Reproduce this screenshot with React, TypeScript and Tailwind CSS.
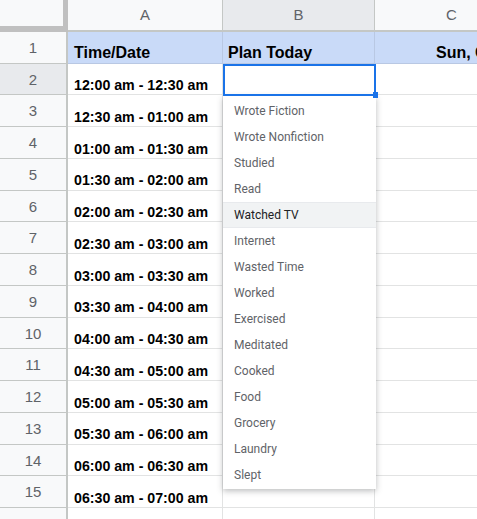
import React from 'react';

const times = [
  '12:00 am - 12:30 am',
  '12:30 am - 01:00 am',
  '01:00 am - 01:30 am',
  '01:30 am - 02:00 am',
  '02:00 am - 02:30 am',
  '02:30 am - 03:00 am',
  '03:00 am - 03:30 am',
  '03:30 am - 04:00 am',
  '04:00 am - 04:30 am',
  '04:30 am - 05:00 am',
  '05:00 am - 05:30 am',
  '05:30 am - 06:00 am',
  '06:00 am - 06:30 am',
  '06:30 am - 07:00 am',
];

const options = [
  'Wrote Fiction',
  'Wrote Nonfiction',
  'Studied',
  'Read',
  'Watched TV',
  'Internet',
  'Wasted Time',
  'Worked',
  'Exercised',
  'Meditated',
  'Cooked',
  'Food',
  'Grocery',
  'Laundry',
  'Slept',
];

function ColumnHeader() {
  return (
    <div className="flex h-[31.75px] shrink-0 text-[15px] text-[#5f6368]">
      <div className="w-[68px] shrink-0 bg-[#f8f9fa] border-r-[5px] border-b-[6px] border-[#c0c0c0]" />
      <div className="w-[155px] shrink-0 flex items-center justify-center bg-[#f8f9fa] border-r border-b-2 border-[#c4c7c5]">
        A
      </div>
      <div className="w-[152px] shrink-0 flex items-center justify-center bg-[#e8eaed] border-r border-b-2 border-[#c4c7c5]">
        B
      </div>
      <div className="w-[154px] shrink-0 flex items-center justify-center bg-[#f8f9fa] border-r border-b-2 border-[#c4c7c5]">
        C
      </div>
    </div>
  );
}

function TitleRow() {
  return (
    <div className="flex h-[31.75px] shrink-0">
      <div className="w-[68px] shrink-0 flex items-center justify-center pt-[2px] bg-[#f8f9fa] border-r-2 border-b border-[#c4c7c5] text-[15px] text-[#5f6368]">
        1
      </div>
      <div className="w-[155px] shrink-0 flex items-end pl-[6px] pb-[2px] bg-[#c9daf8] border-r border-b border-[#b9c8e3] text-[16px] leading-none font-bold text-black">
        Time/Date
      </div>
      <div className="w-[152px] shrink-0 flex items-end pl-[5px] pb-[2px] bg-[#c9daf8] border-r border-b border-[#b9c8e3] text-[16px] leading-none font-bold text-black">
        Plan Today
      </div>
      <div className="w-[154px] shrink-0 flex items-end pl-[61px] pb-[2px] bg-[#c9daf8] border-b border-[#b9c8e3] text-[16px] leading-none font-bold text-black whitespace-nowrap overflow-hidden">
        Sun, Oct 4
      </div>
    </div>
  );
}

function TimeRow({ n, time }: { n?: number; time?: string }) {
  const active = n === 2;
  return (
    <div className="flex h-[31.75px] shrink-0">
      <div
        className={`w-[68px] shrink-0 flex items-center justify-center pt-[2px] border-r-2 border-b border-[#c4c7c5] text-[15px] text-[#5f6368] ${
          active ? 'bg-[#e8eaed]' : 'bg-[#f8f9fa]'
        }`}
      >
        {n}
      </div>
      <div className="w-[155px] shrink-0 flex items-end pl-[6px] pb-[2px] border-r border-b border-[#e2e3e3] text-[14.2px] leading-none font-bold text-black whitespace-nowrap overflow-hidden">
        {time}
      </div>
      <div className="w-[152px] shrink-0 border-r border-b border-[#e2e3e3]" />
      <div className="w-[154px] shrink-0 border-r border-b border-[#e2e3e3]" />
    </div>
  );
}

function Dropdown() {
  return (
    <div className="absolute left-[223px] top-[96px] z-10 w-[153px] bg-white pt-[2px] pb-[1px] shadow-[0_2px_6px_rgba(60,64,67,0.35)] font-['Roboto',sans-serif]">
      {options.map((opt) => (
        <div
          key={opt}
          className={`h-[26px] flex items-center pl-[11px] text-[12px] ${
            opt === 'Watched TV'
              ? 'bg-[#f1f3f4] text-[#202124] border-y border-[#e8eaed]'
              : 'text-[#5f6368]'
          }`}
        >
          {opt}
        </div>
      ))}
    </div>
  );
}

export default function App() {
  return (
    <div className="relative w-[477px] h-[519px] overflow-hidden bg-white font-['Liberation_Sans',Arial,sans-serif]">
      <div className="flex flex-col">
        <ColumnHeader />
        <TitleRow />
        {times.map((t, i) => (
          <TimeRow key={t} n={i + 2} time={t} />
        ))}
        {/* row 16, mostly below the fold */}
        <TimeRow />
      </div>

      {/* selected cell B2 */}
      <div className="absolute left-[223px] top-[63.5px] w-[153px] h-[32.5px] border-2 border-[#1a73e8] z-20 pointer-events-none" />
      <div className="absolute left-[373px] top-[92px] w-[5px] h-[6px] bg-[#1a73e8] z-20" />

      <Dropdown />
    </div>
  );
}
